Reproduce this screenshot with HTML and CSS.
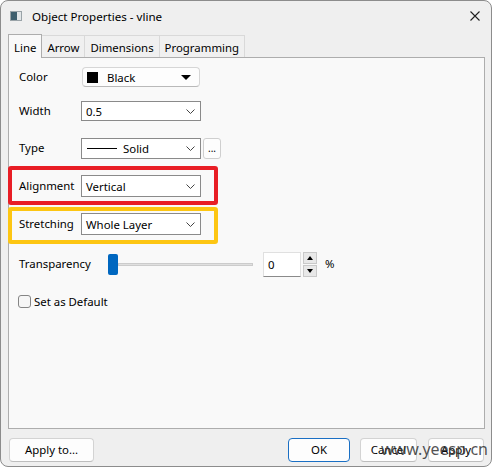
FILE: index.html
```html
<!DOCTYPE html>
<html>
<head>
  <title>Object Properties - vline</title>
  <meta charset="utf-8">
  <link rel="stylesheet" href="styles.css">
</head>
<body>

  <div class="window">

    <!-- Title Bar -->
    <div class="titlebar">
      <span class="app-icon"><span class="app-icon-left"></span></span>
      <span class="title">Object Properties - vline</span>
      <svg class="close" width="10" height="10" viewBox="0 0 10 10">
        <path d="M0.5 0.5 L9.5 9.5 M9.5 0.5 L0.5 9.5" stroke="#1f1f1f" stroke-width="1.1" fill="none"/>
      </svg>
    </div>

    <!-- Tabs -->
    <div class="tabs">
      <div class="tab active">Line</div>
      <div class="tab">Arrow</div>
      <div class="tab">Dimensions</div>
      <div class="tab">Programming</div>
    </div>

    <div class="panel">

      <div class="row row-color">
        <span class="label">Color</span>
        <div class="combo combo-flat color-combo">
          <span class="swatch"></span>
          <span class="combo-text">Black</span>
          <span class="triangle"></span>
        </div>
      </div>

      <div class="row row-width">
        <span class="label">Width</span>
        <div class="combo">
          <span class="combo-text">0.5</span>
          <svg class="chevron" width="9" height="5" viewBox="0 0 9 5"><path d="M0.5 0.5 L4.5 4.5 L8.5 0.5" stroke="#444" fill="none"/></svg>
        </div>
      </div>

      <div class="row row-type">
        <span class="label">Type</span>
        <div class="combo">
          <span class="line-sample"></span>
          <span class="combo-text">Solid</span>
          <svg class="chevron" width="9" height="5" viewBox="0 0 9 5"><path d="M0.5 0.5 L4.5 4.5 L8.5 0.5" stroke="#444" fill="none"/></svg>
        </div>
        <div class="dots-btn">...</div>
      </div>

      <div class="highlight red">
        <div class="row">
          <span class="label">Alignment</span>
          <div class="combo tall">
            <span class="combo-text">Vertical</span>
            <svg class="chevron" width="9" height="5" viewBox="0 0 9 5"><path d="M0.5 0.5 L4.5 4.5 L8.5 0.5" stroke="#444" fill="none"/></svg>
          </div>
        </div>
      </div>

      <div class="highlight yellow">
        <div class="row">
          <span class="label">Stretching</span>
          <div class="combo tall">
            <span class="combo-text">Whole Layer</span>
            <svg class="chevron" width="9" height="5" viewBox="0 0 9 5"><path d="M0.5 0.5 L4.5 4.5 L8.5 0.5" stroke="#444" fill="none"/></svg>
          </div>
        </div>
      </div>

      <div class="row row-transparency">
        <span class="label label-wide">Transparency</span>
        <div class="slider">
          <span class="thumb"></span>
          <span class="track"></span>
        </div>
        <div class="spin-edit">0</div>
        <div class="spin-buttons">
          <span class="spin-btn"><span class="arrow-up"></span></span>
          <span class="spin-btn"><span class="arrow-down"></span></span>
        </div>
        <span class="percent">%</span>
      </div>

      <div class="row row-check">
        <span class="checkbox"></span>
        <span class="check-label">Set as Default</span>
      </div>

    </div>

    <!-- Dialog Buttons -->
    <div class="footer">
      <div class="btn btn-applyto">Apply to...</div>
      <div class="spacer"></div>
      <div class="btn btn-ok">OK</div>
      <div class="btn btn-cancel">Cancel</div>
      <div class="btn btn-apply">Apply</div>
    </div>

    <div class="watermark">www.yeesp.cn</div>
  </div>

</body>
</html>
```

FILE: styles.css
```css
/* General Page Styling */
body {
  margin: 0;
  background-color: #ffffff;
  font-family: "Noto Sans", "Open Sans", sans-serif;
  font-size: 11.4px;
  color: #000;
}

.window {
  position: relative;
  box-sizing: border-box;
  width: 492px;
  height: 467px;
  border: 1px solid #8c8c8c;
  border-radius: 8px;
  background-color: #efefef;
  overflow: hidden;
}

/* Title Bar */
.titlebar {
  display: flex;
  align-items: center;
  height: 30px;
  padding-left: 9px;
}

.app-icon {
  display: flex;
  width: 12px;
  height: 10px;
  background-color: #e2e6e8;
  border: 1px solid #9aa3a8;
  box-sizing: border-box;
}

.app-icon-left {
  width: 6px;
  background-color: #3f5f6e;
}

.title {
  margin-left: 10px;
  font-size: 11.6px;
}

.close {
  margin-left: auto;
  margin-right: 11px;
}

/* Tabs */
.tabs {
  display: flex;
  align-items: flex-end;
  height: 26px;
  margin-left: 7px;
}

.tab {
  box-sizing: border-box;
  height: 22px;
  padding: 2px 5px 0 5px;
  line-height: 19px;
  border: 1px solid #d9d9d9;
  border-bottom: none;
  margin-left: -1px;
  background-color: #f0f0f0;
}

.tab.active {
  height: 24px;
  margin-left: 0;
  margin-bottom: -1px;
  padding: 3px 5px 0 5px;
  line-height: 19px;
  background-color: #f9f9f9;
  border-color: #adadad;
  position: relative;
  z-index: 1;
}

/* Panel */
.panel {
  box-sizing: border-box;
  height: 372px;
  margin: 0 6px 0 7px;
  padding: 9px 0 0 10px;
  border: 1px solid #adadad;
  background-color: #f9f9f9;
}

.row {
  display: flex;
  align-items: center;
}

.label {
  width: 62px;
  margin-top: -2px;
}

.label-wide {
  width: 89px;
}

/* Combo Boxes */
.combo {
  box-sizing: border-box;
  display: flex;
  align-items: center;
  width: 120px;
  height: 20px;
  padding: 0 4px;
  border: 1px solid #8a8a8a;
  background-color: #ffffff;
}

.combo.tall {
  height: 22px;
}

.combo-flat {
  border: 1px solid #d6d6d6;
  border-bottom-color: #b9b9b9;
  border-radius: 4px;
  background-color: #fdfdfd;
}

.color-combo {
  width: 118px;
  margin-left: 1px;
  padding-left: 4px;
}

.swatch {
  width: 11px;
  height: 11px;
  background-color: #000;
  margin-right: 9px;
}

.triangle {
  margin-left: auto;
  margin-right: 4px;
  border-left: 5px solid transparent;
  border-right: 5px solid transparent;
  border-top: 5px solid #000;
}

.chevron {
  margin-left: auto;
  margin-right: 1px;
}

.line-sample {
  width: 30px;
  height: 1px;
  background-color: #000;
  margin: 0 6px 0 1px;
}

.row-width {
  margin-top: 14px;
  height: 20px;
}

.row-type {
  margin-top: 17px;
}

.row-type .combo {
  height: 21px;
}

.dots-btn {
  box-sizing: border-box;
  width: 18px;
  height: 21px;
  margin-left: 2px;
  border: 1px solid #cfcfcf;
  border-radius: 3px;
  background-color: #fdfdfd;
  text-align: center;
  line-height: 19px;
  font-size: 10px;
}

/* Highlight Boxes */
.highlight {
  box-sizing: border-box;
  width: 210px;
  margin-left: -11px;
  padding-left: 7px;
  border: 4px solid;
  border-radius: 3px;
}

.highlight.red {
  height: 39px;
  margin-top: 7px;
  padding-top: 5px;
  border-color: #e81d25;
}

.highlight.yellow {
  height: 37px;
  margin-top: 2px;
  padding-top: 2px;
  border-color: #fdc613;
}

/* Transparency */
.row-transparency {
  margin-top: 8px;
  height: 25px;
}

.slider {
  display: flex;
  align-items: center;
  width: 145px;
}

.thumb {
  width: 10px;
  height: 21px;
  background-color: #0067c0;
  border-radius: 2px;
}

.track {
  flex: 1;
  height: 3px;
  background-color: #e0e0e0;
  border: 1px solid #cccccc;
  box-sizing: border-box;
}

.spin-edit {
  box-sizing: border-box;
  width: 38px;
  height: 25px;
  margin-left: 10px;
  padding-left: 4px;
  line-height: 23px;
  border: 1px solid #e0e0e0;
  border-bottom: 1px solid #8a8a8a;
  background-color: #ffffff;
}

.spin-buttons {
  display: flex;
  flex-direction: column;
  gap: 1px;
  margin-left: 2px;
}

.spin-btn {
  box-sizing: border-box;
  display: flex;
  align-items: center;
  justify-content: center;
  width: 14px;
  height: 12px;
  border: 1px solid #c9c9c9;
  background-color: #e8e8e8;
}

.arrow-up {
  border-left: 3px solid transparent;
  border-right: 3px solid transparent;
  border-bottom: 4px solid #000;
}

.arrow-down {
  border-left: 3px solid transparent;
  border-right: 3px solid transparent;
  border-top: 4px solid #000;
}

.percent {
  margin-left: 8px;
  margin-top: -2px;
}

/* Checkbox */
.row-check {
  margin-top: 17px;
}

.checkbox {
  box-sizing: border-box;
  width: 13px;
  height: 13px;
  margin-left: -1px;
  border: 1px solid #858585;
  border-radius: 3px;
  background-color: #f6f6f6;
}

.check-label {
  margin-left: 3px;
}

/* Dialog Buttons */
.footer {
  display: flex;
  margin: 9px 7px 0 8px;
}

.spacer {
  flex: 1;
}

.btn {
  box-sizing: border-box;
  height: 24px;
  line-height: 22px;
  text-align: center;
  border: 1px solid #d3d3d3;
  border-bottom-color: #bdbdbd;
  border-radius: 4px;
  background-color: #fdfdfd;
}

.btn-applyto {
  width: 85px;
}

.btn-ok {
  width: 62px;
  border-color: #1a6fc4;
}

.btn-cancel {
  width: 57px;
  margin-left: 10px;
}

.btn-apply {
  width: 56px;
  margin-left: 11px;
}

.watermark {
  position: absolute;
  left: 380px;
  top: 437px;
  font-size: 16px;
  color: rgba(50, 50, 50, 0.85);
  pointer-events: none;
}
```
